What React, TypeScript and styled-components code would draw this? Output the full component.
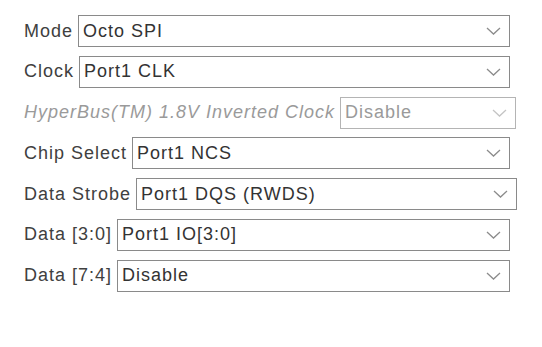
import React from 'react'
import styled, { createGlobalStyle } from 'styled-components'

const GlobalStyle = createGlobalStyle`
  body {
    margin: 0;
    background: #ffffff;
    font-family: 'Liberation Sans', Arial, sans-serif;
  }
`

const Form = styled.div`
  display: flex;
  flex-direction: column;
  gap: 8.8px;
  padding: 15px 0 0 24px;
`

const Row = styled.div<{ end: number }>`
  display: flex;
  align-items: center;
  gap: 5px;
  width: ${(props) => props.end - 24}px;
  height: 32px;
`

const Label = styled.span<{ disabled?: boolean }>`
  font-size: 18px;
  letter-spacing: 1px;
  color: ${(props) => (props.disabled ? '#9a9a9a' : '#404040')};
  font-style: ${(props) => (props.disabled ? 'italic' : 'normal')};
  white-space: nowrap;
`

const Select = styled.div<{ disabled?: boolean }>`
  flex: 1;
  height: 32px;
  box-sizing: border-box;
  display: flex;
  align-items: center;
  justify-content: space-between;
  padding: 0 8px 0 4px;
  border: 1px solid ${(props) => (props.disabled ? '#b4b4b4' : '#8a8a8a')};
  background: #ffffff;
  font-size: 18px;
  letter-spacing: 1px;
  color: ${(props) => (props.disabled ? '#9a9a9a' : '#333333')};
  white-space: nowrap;
`

const Chevron = ({ disabled }: { disabled?: boolean }) => (
  <svg width="15" height="8" viewBox="0 0 15 8">
    <path
      d="M1 1 L7.5 7 L14 1"
      fill="none"
      stroke={disabled ? '#c4c4c4' : '#8c8c8c'}
      strokeWidth="1.3"
    />
  </svg>
)

const rows = [
  { label: 'Mode', value: 'Octo SPI', end: 510 },
  { label: 'Clock', value: 'Port1 CLK', end: 510 },
  {
    label: 'HyperBus(TM) 1.8V Inverted Clock',
    value: 'Disable',
    end: 516,
    disabled: true,
  },
  { label: 'Chip Select', value: 'Port1 NCS', end: 510 },
  { label: 'Data Strobe', value: 'Port1 DQS (RWDS)', end: 517 },
  { label: 'Data [3:0]', value: 'Port1 IO[3:0]', end: 510 },
  { label: 'Data [7:4]', value: 'Disable', end: 510 },
]

const App: React.FC = () => (
  <>
    <GlobalStyle />
    <Form>
      {rows.map((r) => (
        <Row key={r.label} end={r.end}>
          <Label disabled={r.disabled}>{r.label}</Label>
          <Select disabled={r.disabled}>
            <span>{r.value}</span>
            <Chevron disabled={r.disabled} />
          </Select>
        </Row>
      ))}
    </Form>
  </>
)

export default App
